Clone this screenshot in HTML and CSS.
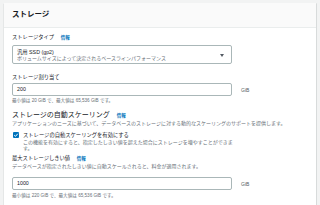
FILE: index.html
```html
<!DOCTYPE html>
<html lang="ja">
<head>
    <meta charset="UTF-8">
    <meta name="viewport" content="width=device-width, initial-scale=1.0">
    <title>ストレージ</title>
    <link rel="stylesheet" href="styles.css">
</head>
<body>
    <div class="card">
        <div class="card-header">ストレージ</div>
        <div class="card-body">
            <div class="label">ストレージタイプ <a class="info">情報</a></div>
            <div class="select">
                <div class="select-value">汎用 SSD (gp2)</div>
                <div class="select-desc">ボリュームサイズによって決定されるベースラインパフォーマンス</div>
                <span class="caret"></span>
            </div>

            <div class="label label-gap">ストレージ割り当て</div>
            <div class="input-row">
                <div class="input">200</div>
                <span class="unit">GiB</span>
            </div>
            <div class="hint">最小値は 20 GiB で、最大値は 65,536 GiB です。</div>

            <div class="section-title">ストレージの自動スケーリング <a class="info">情報</a></div>
            <div class="desc">アプリケーションのニーズに基づいて、データベースのストレージに対する動的なスケーリングのサポートを提供します。</div>

            <div class="check-row">
                <span class="checkbox">
                    <svg viewBox="0 0 8 8" width="6" height="6"><path d="M1.6 4.2 L3.3 5.8 L6.4 2.3" fill="none" stroke="#fff" stroke-width="1.3"/></svg>
                </span>
                <span class="check-label">ストレージの自動スケーリングを有効にする</span>
            </div>
            <div class="check-desc">この機能を有効にすると、指定したしきい値を超えた場合にストレージを増やすことができます。</div>

            <div class="label label-gap2">最大ストレージしきい値 <a class="info">情報</a></div>
            <div class="desc">データベースが指定されたしきい値に自動スケールされると、料金が適用されます。</div>
            <div class="input-row input-gap">
                <div class="input">1000</div>
                <span class="unit">GiB</span>
            </div>
            <div class="hint hint-last">最小値は 220 GiB で、最大値は 65,536 GiB です。</div>
        </div>
    </div>
</body>
</html>
```

FILE: styles.css
```css
body {
    margin: 0;
    background: #f2f3f3;
    font-family: "Liberation Sans", "Noto Sans CJK JP", sans-serif;
    color: #16191f;
}

.card {
    margin: 3px 4px;
    background: #fff;
    box-shadow: 0 1px 1px rgba(0, 28, 36, 0.3), 1px 0 0 #e4e6e6;
}

.card-header {
    height: 24px;
    line-height: 24px;
    padding-left: 8px;
    background: #fafafa;
    border-bottom: 1px solid #eaeded;
    font-size: 7.5px;
    font-weight: bold;
}

.card-body {
    padding: 5px 8px 8px;
}

.label {
    font-size: 5.3px;
    line-height: 8px;
}

.label-gap {
    margin-top: 9px;
}

.label-gap2 {
    margin-top: 3px;
}

.info {
    margin-left: 5px;
    color: #0073bb;
    font-size: 4.5px;
    font-weight: bold;
}

.select {
    position: relative;
    margin-top: 3px;
    width: 220px;
    box-sizing: border-box;
    border: 1px solid #aab7b8;
    border-radius: 2px;
    padding: 3px 4px 2px;
}

.select-value {
    font-size: 5.3px;
    line-height: 6px;
}

.select-desc {
    font-size: 5px;
    line-height: 6px;
    color: #687078;
}

.caret {
    position: absolute;
    right: 7px;
    top: 8px;
    border-left: 2px solid transparent;
    border-right: 2px solid transparent;
    border-top: 3px solid #545b64;
}

.input-row {
    display: flex;
    align-items: center;
    margin-top: 2px;
}

.input-gap {
    margin-top: 8px;
}

.input {
    width: 220px;
    height: 13px;
    box-sizing: border-box;
    border: 1px solid #aab7b8;
    border-radius: 2px;
    padding-left: 4px;
    font-size: 5.3px;
    line-height: 11px;
}

.unit {
    margin-left: 9px;
    font-size: 5px;
    color: #545b64;
}

.hint {
    margin-top: 1px;
    font-size: 4.6px;
    line-height: 7px;
    color: #687078;
}

.hint-last {
    margin-top: 2px;
}

.section-title {
    margin-top: 6px;
    font-size: 7px;
    line-height: 9px;
}

.desc {
    font-size: 5px;
    line-height: 6px;
    color: #687078;
}

.check-row {
    display: flex;
    align-items: center;
    margin-top: 5px;
    height: 7px;
}

.checkbox {
    display: flex;
    align-items: center;
    justify-content: center;
    width: 6px;
    height: 6px;
    margin-left: 1px;
    border-radius: 1px;
    background: #0073bb;
}

.check-label {
    margin-left: 4px;
    font-size: 5.3px;
}

.check-desc {
    margin-top: 1px;
    padding-left: 11px;
    max-width: 212px;
    font-size: 5px;
    line-height: 6px;
    color: #687078;
}
```
